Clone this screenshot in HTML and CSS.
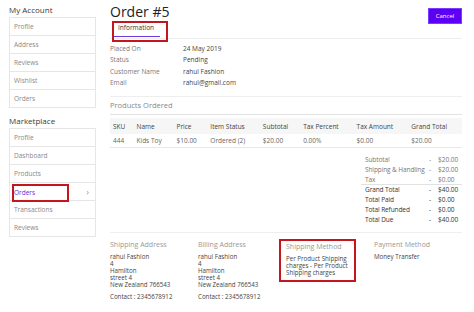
FILE: index.html
```html
<!DOCTYPE html>
<html lang="en">
<head>
    <meta charset="UTF-8">
    <meta name="viewport" content="width=device-width, initial-scale=1.0">
    <title>Order #5</title>
    <link rel="stylesheet" href="styles.css">
</head>
<body>

    <div class="page">
        <aside class="sidebar">
            <h3>My Account</h3>
            <ul class="menu">
                <li>Profile</li>
                <li>Address</li>
                <li>Reviews</li>
                <li>Wishlist</li>
                <li>Orders</li>
            </ul>

            <h3>Marketplace</h3>
            <ul class="menu">
                <li>Profile</li>
                <li>Dashboard</li>
                <li>Products</li>
                <li class="active"><span class="highlight">Orders</span><span class="chevron">&#8250;</span></li>
                <li>Transactions</li>
                <li>Reviews</li>
            </ul>
        </aside>

        <main class="order">
            <div class="order-head">
                <h1>Order #5</h1>
                <button class="btn-cancel">Cancel</button>
            </div>

            <div class="tabs">
                <span class="tab highlight"><span class="tab-label">Information</span></span>
            </div>

            <div class="info">
                <div class="info-row"><span class="label">Placed On</span><span>24 May 2019</span></div>
                <div class="info-row"><span class="label">Status</span><span>Pending</span></div>
                <div class="info-row"><span class="label">Customer Name</span><span>rahul Fashion</span></div>
                <div class="info-row"><span class="label">Email</span><span>rahul@gmail.com</span></div>
            </div>

            <h2 class="section-title">Products Ordered</h2>

            <table class="items">
                <thead>
                    <tr>
                        <th>SKU</th>
                        <th>Name</th>
                        <th>Price</th>
                        <th>Item Status</th>
                        <th>Subtotal</th>
                        <th>Tax Percent</th>
                        <th>Tax Amount</th>
                        <th>Grand Total</th>
                    </tr>
                </thead>
                <tbody>
                    <tr>
                        <td>444</td>
                        <td>Kids Toy</td>
                        <td>$10.00</td>
                        <td>Ordered (2)</td>
                        <td>$20.00</td>
                        <td>0.00%</td>
                        <td>$0.00</td>
                        <td>$20.00</td>
                    </tr>
                </tbody>
            </table>

            <div class="totals-wrap">
                <table class="totals">
                    <tr><td>Subtotal</td><td class="dash">-</td><td>$20.00</td></tr>
                    <tr><td>Shipping &amp; Handling</td><td class="dash">-</td><td>$20.00</td></tr>
                    <tr><td>Tax</td><td class="dash">-</td><td>$0.00</td></tr>
                    <tr class="strong first"><td>Grand Total</td><td class="dash">-</td><td>$40.00</td></tr>
                    <tr class="strong"><td>Total Paid</td><td class="dash">-</td><td>$0.00</td></tr>
                    <tr class="strong"><td>Total Refunded</td><td class="dash">-</td><td>$0.00</td></tr>
                    <tr class="strong"><td>Total Due</td><td class="dash">-</td><td>$40.00</td></tr>
                </table>
            </div>

            <div class="addresses">
                <div class="address">
                    <h4>Shipping Address</h4>
                    <p>rahul Fashion<br>4<br>Hamilton<br>street 4<br>New Zealand 766543</p>
                    <p class="contact">Contact : 2345678912</p>
                </div>
                <div class="address">
                    <h4>Billing Address</h4>
                    <p>rahul Fashion<br>4<br>Hamilton<br>street 4<br>New Zealand 766543</p>
                    <p class="contact">Contact : 2345678912</p>
                </div>
                <div class="address">
                    <div class="method-box highlight">
                        <h4>Shipping Method</h4>
                        <p>Per Product Shipping charges - Per Product Shipping charges</p>
                    </div>
                </div>
                <div class="address">
                    <h4>Payment Method</h4>
                    <p>Money Transfer</p>
                </div>
            </div>
        </main>
    </div>

</body>
</html>
```

FILE: styles.css
```css
body {
    font-family: 'Open Sans', sans-serif;
    margin: 0;
    background: #fff;
    color: #444;
    font-size: 6.5px;
}

.page {
    display: flex;
    padding: 4px 12px 0 9px;
    gap: 14px;
}

.sidebar {
    width: 87px;
    flex-shrink: 0;
}

.sidebar h3 {
    font-size: 8px;
    font-weight: 400;
    color: #3a3a3a;
    margin: 0 0 2px;
    line-height: 11px;
}

.menu {
    list-style: none;
    margin: 0 0 7px;
    padding: 0;
    border: 1px solid #e6e6e6;
}

.menu li {
    display: flex;
    align-items: center;
    justify-content: space-between;
    height: 17px;
    padding: 0 4px;
    color: #888;
    border-top: 1px solid #e6e6e6;
}

.menu li:first-child {
    border-top: none;
}

.menu li.active {
    color: #5b2be0;
}

.chevron {
    color: #999;
    font-size: 9px;
    margin-right: 2px;
}

.highlight {
    outline: 2px solid #c4161c;
}

.menu li.active .highlight {
    display: inline-block;
    line-height: 8px;
    padding: 3px 32px 3px 0;
    margin-top: 2px;
}

.order {
    flex: 1;
    min-width: 0;
}

.order-head {
    display: flex;
    justify-content: space-between;
    align-items: flex-start;
}

.order-head h1 {
    font-size: 14px;
    font-weight: 400;
    color: #222;
    margin: 0;
    line-height: 16px;
}

.btn-cancel {
    background: #5b00f5;
    color: #fff;
    border: 1px solid #7a3cff;
    font-family: inherit;
    font-size: 6px;
    padding: 0;
    width: 34px;
    height: 16px;
    margin-top: 4px;
    cursor: pointer;
}

.tabs {
    border-bottom: 1px solid #eee;
    margin-top: -3px;
    height: 17px;
}

.tab {
    display: inline-block;
    margin-left: 2px;
    width: 56px;
    height: 21px;
    box-sizing: border-box;
    padding: 3px 0 0 2px;
    outline-offset: -2px;
    line-height: 8px;
}

.tab-label {
    display: inline-block;
    width: 46px;
    padding: 0 0 4px 4px;
    box-sizing: border-box;
    border-bottom: 1px solid #6a3ad8;
    color: #333;
    font-size: 6.5px;
}

.info {
    padding: 4px 0 8px;
    border-bottom: 1px solid #eee;
}

.info-row {
    display: flex;
    height: 11.33px;
    align-items: center;
}

.info-row .label {
    width: 73px;
    color: #777;
}

.section-title {
    font-size: 7.5px;
    font-weight: 400;
    color: #888;
    margin: 0;
    line-height: 10px;
    padding: 3px 0 4px;
    border-bottom: 1px solid #e2e2e2;
}

.items {
    width: 100%;
    border-collapse: collapse;
    margin-top: 3px;
}

.items th {
    background: #f6f6f6;
    font-weight: 400;
    color: #444;
    text-align: left;
    height: 16px;
    padding: 0 3px;
}

.items td {
    color: #666;
    height: 13px;
    padding: 0 3px;
    border-bottom: 1px solid #e8e8e8;
}

.totals-wrap {
    display: flex;
    justify-content: flex-end;
    padding: 6px 0 8px;
    border-bottom: 1px solid #eee;
}

.totals {
    border-collapse: collapse;
    width: 101px;
    white-space: nowrap;
}

.totals td {
    height: 10px;
    padding: 0;
    color: #777;
}

.totals td:first-child {
    padding-left: 4px;
    width: 64px;
    letter-spacing: -0.1px;
}

.totals .dash {
    width: 9px;
}

.totals .strong td {
    color: #333;
}

.totals .first td {
    border-top: 1px solid #e2e2e2;
    height: 9px;
}

.addresses {
    display: flex;
    padding-top: 7px;
}

.address {
    width: 88px;
    flex-shrink: 0;
}

.address h4 {
    font-size: 7px;
    font-weight: 400;
    color: #999;
    margin: 0 0 3px;
    line-height: 10px;
}

.address p {
    margin: 0;
    line-height: 7px;
    color: #444;
    font-size: 6.2px;
}

.address .contact {
    margin-top: 5px;
}

.method-box {
    width: 64px;
    margin: 1px 0 0 -5px;
    padding: 1px 4px 4px 5px;
}
```
